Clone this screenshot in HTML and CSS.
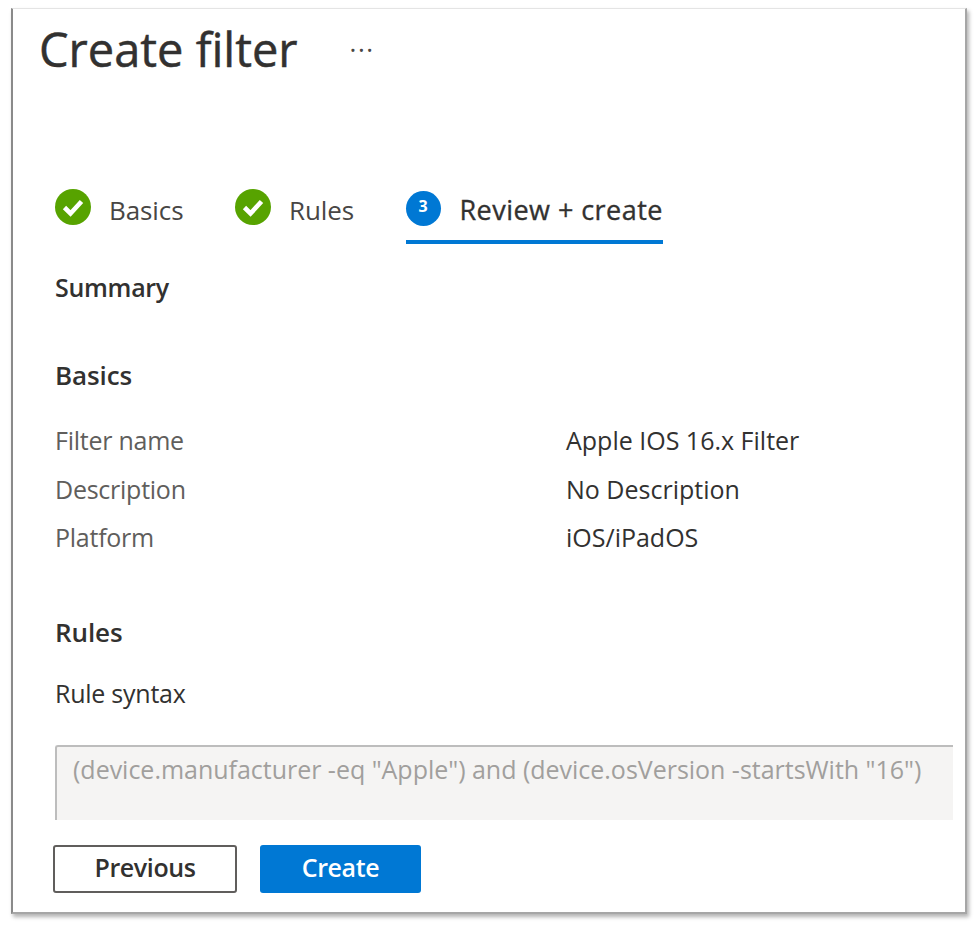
FILE: index.html
```html
<!DOCTYPE html>
<html lang="en">
<head>
<meta charset="utf-8">
<title>Create filter</title>
<link rel="stylesheet" href="styles.css">
</head>
<body>
<main class="panel">
  <header class="title-row">
    <h1 class="title">Create filter</h1>
    <span class="more">&#183;&#183;&#183;</span>
  </header>
  <nav class="steps">
    <div class="step">
      <svg class="step-icon" viewBox="0 0 36 36"><circle cx="18" cy="18" r="18" fill="#57a300"/><path d="M9.5 18.5l6 6L26.5 12.5" fill="none" stroke="#fff" stroke-width="4.6"/></svg>
      <span>Basics</span>
    </div>
    <div class="step">
      <svg class="step-icon" viewBox="0 0 36 36"><circle cx="18" cy="18" r="18" fill="#57a300"/><path d="M9.5 18.5l6 6L26.5 12.5" fill="none" stroke="#fff" stroke-width="4.6"/></svg>
      <span>Rules</span>
    </div>
    <div class="step step-active">
      <span class="step-num">3</span>
      <span class="step-label">Review + create</span>
    </div>
  </nav>
  <section class="content">
    <h2 class="summary">Summary</h2>
    <h2 class="heading basics">Basics</h2>
    <dl class="details">
      <dt>Filter name</dt><dd>Apple IOS 16.x Filter</dd>
      <dt>Description</dt><dd>No Description</dd>
      <dt>Platform</dt><dd>iOS/iPadOS</dd>
    </dl>
    <h2 class="heading rules">Rules</h2>
    <p class="syntax-label">Rule syntax</p>
    <div class="syntax">(device.manufacturer -eq "Apple") and (device.osVersion -startsWith "16")</div>
  </section>
  <footer class="actions">
    <button class="btn btn-secondary" type="button">Previous</button>
    <button class="btn btn-primary" type="button">Create</button>
  </footer>
</main>
</body>
</html>
```
FILE: styles.css
```css
* { box-sizing: border-box; }
html, body { margin: 0; background: #fff; }
body {
  width: 978px;
  height: 930px;
  overflow: hidden;
  padding: 8px 11px 17px 11px;
  font-family: "Open Sans", "Noto Sans", sans-serif;
  color: #323130;
}
.panel {
  width: 956px;
  height: 906px;
  background: #fff;
  display: flex;
  flex-direction: column;
  border-top: 1px solid #e4e4e4;
  border-left: 2px solid #8a8a8a;
  border-right: 2px solid #a6a6a6;
  border-bottom: 2px solid #a6a6a6;
  box-shadow: 2px 3px 4px rgba(0,0,0,.3);
}
.title-row {
  display: flex;
  align-items: center;
  padding-left: 26px;
  height: 80px;
}
.title {
  margin: 0;
  font-size: 47px;
  font-weight: 400;
  -webkit-text-stroke: 0.5px #323130;
  letter-spacing: 0;
  line-height: 80px;
}
.more {
  margin-left: 52px;
  font-size: 26px;
  letter-spacing: 1.5px;
  color: #484644;
  line-height: 1;
}
.steps {
  display: flex;
  margin-top: 92px;
  padding-left: 42px;
  height: 63px;
  font-size: 26px;
  letter-spacing: -0.1px;
  color: #484644;
}
.step {
  display: flex;
  align-items: flex-start;
  gap: 18px;
  margin-right: 51.5px;
  line-height: 44px;
  padding-top: 7px;
}
.step-icon { width: 36px; height: 36px; margin-top: 1px; flex: none; }
.step-active {
  gap: 19px;
  color: #323130;
  border-bottom: 4px solid #0078d4;
  margin-right: 0;
}
.step-label {
  font-size: 27px;
  letter-spacing: 0.45px;
  -webkit-text-stroke: 0.35px #323130;
}
.step-num {
  width: 35px;
  height: 35px;
  margin-top: 3px;
  border-radius: 50%;
  background: #0078d4;
  color: #fff;
  font-size: 16px;
  font-weight: 700;
  line-height: 31px;
  text-align: center;
  flex: none;
}
.content {
  padding-left: 42px;
  padding-right: 12px;
  flex: none;
  font-size: 25px;
}
.summary, .heading {
  margin: 0;
  font-size: 26px;
  font-weight: 600;
  letter-spacing: -0.1px;
  line-height: 36px;
}
.summary { margin-top: 25px; font-size: 25px; letter-spacing: -0.3px; }
.basics { margin-top: 52px; }
.rules { margin-top: 52px; }
.details {
  display: grid;
  grid-template-columns: 511px 1fr;
  grid-auto-rows: 48.5px;
  margin: 23px 0 0;
  line-height: 48.5px;
}
.details dt { color: #605e5c; letter-spacing: -0.25px; }
.details dd { margin: 0; color: #323130; }
.syntax-label { margin: 25px 0 0; line-height: 36px; letter-spacing: -0.25px; }
.syntax {
  margin-top: 34px;
  height: 75px;
  padding: 2px 16px;
  background: #f5f4f3;
  border-top: 2px solid #bdbdbd;
  border-left: 2px solid #bdbdbd;
  border-top-left-radius: 3px;
  color: #a19f9d;
  letter-spacing: -0.02px;
  line-height: 40px;
  white-space: nowrap;
}
.actions {
  display: flex;
  gap: 23px;
  padding-left: 40px;
  margin-top: 25px;
}
.btn {
  height: 48px;
  border-radius: 3px;
  font-family: inherit;
  font-size: 25px;
  font-weight: 600;
  letter-spacing: -0.4px;
  padding: 0 0 4px;
}
.btn-secondary {
  width: 184px;
  background: #fff;
  border: 2px solid #605e5c;
  color: #323130;
}
.btn-primary {
  width: 161px;
  background: #0078d4;
  border: 0;
  color: #fff;
}
```
